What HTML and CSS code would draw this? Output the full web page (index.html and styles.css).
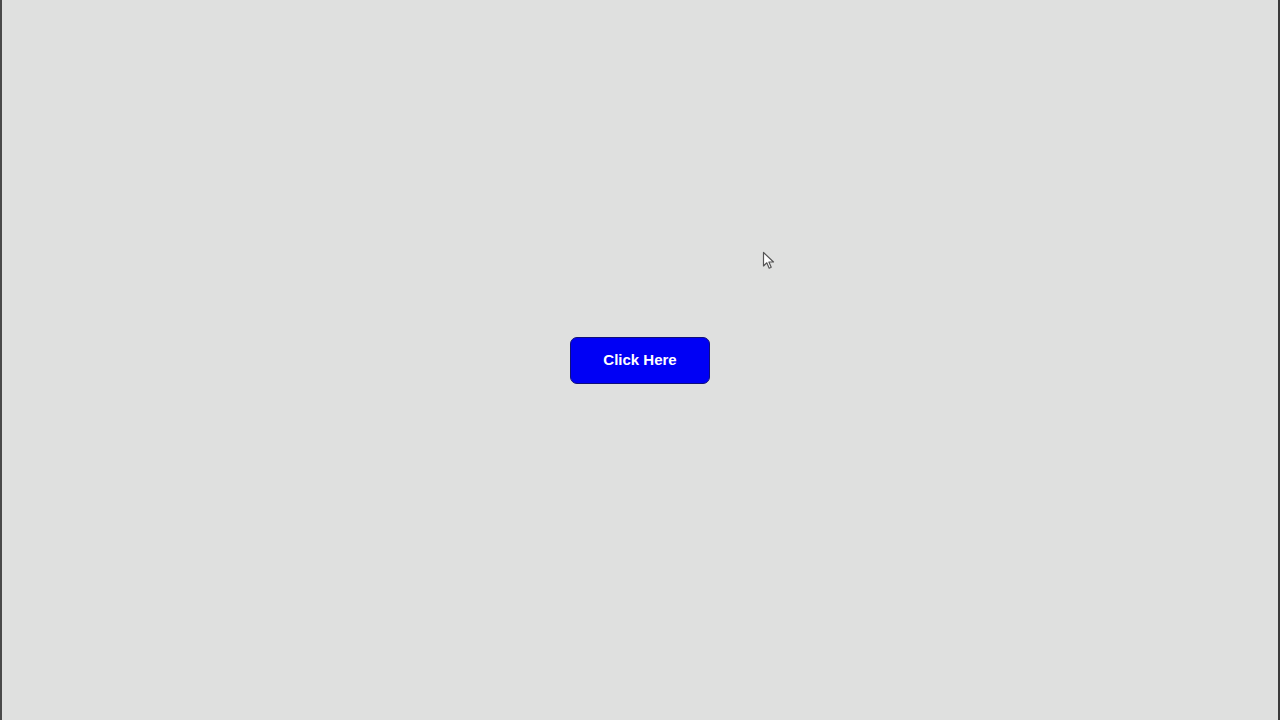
FILE: index.html
```html
<!DOCTYPE html>
<html>
<head>
<meta charset="utf-8">
<link rel="stylesheet" href="styles.css">
</head>
<body>
<div class="stage">
  <button class="cta">Click Here</button>
  <svg class="cursor" width="14" height="20" viewBox="0 0 14 20">
    <path d="M1.5 1.5 L1.5 15 L4.8 11.8 L7.2 17.2 L9.2 16.3 L6.9 11 L11.5 11 Z" fill="#fff" stroke="#555" stroke-width="1.2" stroke-linejoin="round"/>
  </svg>
</div>
</body>
</html>
```
FILE: styles.css
```css
html, body {
  margin: 0;
  padding: 0;
  height: 100%;
}
body {
  background: #dfe0df;
  font-family: "Liberation Sans", Arial, sans-serif;
}
.stage {
  position: relative;
  box-sizing: border-box;
  height: 720px;
  border-left: 2px solid #4a4a4a;
  border-right: 2px solid #3a3a3a;
  display: flex;
  align-items: center;
  justify-content: center;
}
.cta {
  width: 140px;
  height: 47px;
  padding: 0 0 2px 0;
  background: #0000f5;
  border: 1px solid #10107a;
  border-radius: 7px;
  color: #ffffff;
  font-family: "Liberation Sans", Arial, sans-serif;
  font-weight: bold;
  font-size: 15px;
  cursor: pointer;
}
.cursor {
  position: absolute;
  left: 760px;
  top: 251px;
}
```
